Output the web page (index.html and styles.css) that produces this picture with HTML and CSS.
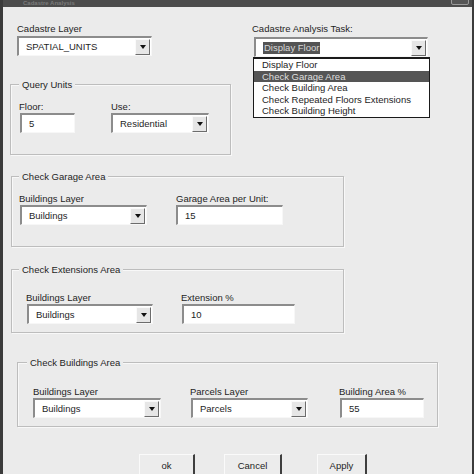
FILE: index.html
```html
<!DOCTYPE html>
<html>
<head>
<meta charset="utf-8">
<link rel="stylesheet" href="styles.css">
</head>
<body>
<div class="window">
  <div class="titlebar">
    <span class="title">Cadastre Analysis</span>
    <span class="close"></span>
  </div>
  <div class="content">
    <div class="top">
      <div class="left-col">
        <div class="lbl cad-lbl">Cadastre Layer</div>
        <div class="combo cad-combo"><span class="val">SPATIAL_UNITS</span><span class="btn"><i></i></span></div>
        <div class="group query">
          <span class="legend">Query Units</span>
          <div class="field f-floor">
            <div class="lbl">Floor:</div>
            <div class="input w-floor"><span class="val">5</span></div>
          </div>
          <div class="field f-use">
            <div class="lbl">Use:</div>
            <div class="combo w-use"><span class="val">Residential</span><span class="btn"><i></i></span></div>
          </div>
        </div>
      </div>
      <div class="right-col">
        <div class="lbl">Cadastre Analysis Task:</div>
        <div class="combo task-combo"><span class="val"><span class="sel">Display Floor</span></span><span class="btn"><i></i></span></div>
        <ul class="list">
          <li>Display Floor</li>
          <li class="hi">Check Garage Area</li>
          <li>Check Building Area</li>
          <li>Check Repeated Floors Extensions</li>
          <li>Check Building Height</li>
        </ul>
      </div>
    </div>

    <div class="group garage">
      <span class="legend">Check Garage Area</span>
      <div class="field">
        <div class="lbl">Buildings Layer</div>
        <div class="combo w-g1"><span class="val">Buildings</span><span class="btn"><i></i></span></div>
      </div>
      <div class="field">
        <div class="lbl lbl-left">Garage Area per Unit:</div>
        <div class="input w-g2"><span class="val">15</span></div>
      </div>
    </div>

    <div class="group ext">
      <span class="legend">Check Extensions Area</span>
      <div class="field">
        <div class="lbl">Buildings Layer</div>
        <div class="combo w-e1"><span class="val">Buildings</span><span class="btn"><i></i></span></div>
      </div>
      <div class="field">
        <div class="lbl">Extension %</div>
        <div class="input w-e2"><span class="val">10</span></div>
      </div>
    </div>

    <div class="group bld">
      <span class="legend">Check Buildings Area</span>
      <div class="field">
        <div class="lbl lbl-flush">Buildings Layer</div>
        <div class="combo w-b1 flush"><span class="val">Buildings</span><span class="btn"><i></i></span></div>
      </div>
      <div class="field f-parcels">
        <div class="lbl">Parcels Layer</div>
        <div class="combo w-b2"><span class="val">Parcels</span><span class="btn"><i></i></span></div>
      </div>
      <div class="field f-area">
        <div class="lbl">Building Area %</div>
        <div class="input w-b3"><span class="val">55</span></div>
      </div>
    </div>

    <div class="buttons">
      <div class="button b-ok">ok</div>
      <div class="button b-cancel">Cancel</div>
      <div class="button b-apply">Apply</div>
    </div>
  </div>
</div>
</body>
</html>
```

FILE: styles.css
```css
* { box-sizing: border-box; }
html, body { margin: 0; padding: 0; }
body {
  width: 474px;
  height: 474px;
  overflow: hidden;
  background: #ebebeb;
  font-family: "Liberation Sans", Arial, sans-serif;
  font-size: 9.5px;
  color: #1e1e1e;
}
.window {
  width: 474px;
  height: 474px;
  border-left: 3px solid #3b3b3b;
  border-right: 2px solid #3b3b3b;
  background: #ebebeb;
  overflow: hidden;
}
.titlebar {
  height: 7px;
  background: #4c4c4c;
  position: relative;
  overflow: hidden;
  display: flex;
  align-items: center;
}
.title {
  margin-left: 20px;
  font-size: 6px;
  line-height: 7px;
  color: #7a7a7a;
  font-weight: bold;
}
.close {
  position: absolute;
  right: 3px;
  top: -2px;
  width: 18px;
  height: 7px;
  border: 1px solid #9a9a9a;
  border-radius: 2px;
  background: #555;
}
.content {
  padding-top: 15px;
}
.lbl {
  height: 13px;
  line-height: 13px;
  white-space: nowrap;
}
.top {
  display: flex;
  gap: 21px;
  padding-left: 7px;
}
.left-col { width: 221px; }
.cad-lbl { margin-left: 7px; }
.cad-combo { margin-left: 7px; margin-top: 1px; width: 135px; }

/* controls */
.combo, .input {
  height: 20px;
  background: #fff;
  border-top: 2px solid #8c8c8c;
  border-left: 2px solid #8c8c8c;
  border-right: 1px solid #f7f7f7;
  border-bottom: 1px solid #f7f7f7;
  display: flex;
  align-items: center;
  position: relative;
}
.val {
  flex: 1;
  padding-left: 7px;
  white-space: nowrap;
  overflow: hidden;
}
.btn {
  width: 15px;
  height: 16px;
  margin-right: 1px;
  background: #e6e6e6;
  border-top: 1px solid #fafafa;
  border-left: 1px solid #fafafa;
  border-right: 1px solid #6c6c6c;
  border-bottom: 1px solid #6c6c6c;
  display: flex;
  align-items: center;
  justify-content: center;
}
.btn i {
  width: 0;
  height: 0;
  border-left: 3px solid transparent;
  border-right: 3px solid transparent;
  border-top: 4px solid #111;
}

/* groups */
.group {
  position: relative;
  border: 1px solid #bdbdbd;
  box-shadow: inset 1px 1px 0 #f8f8f8, 1px 1px 0 #f8f8f8;
  display: flex;
  align-items: flex-start;
}
.legend {
  position: absolute;
  top: -7px;
  height: 13px;
  line-height: 13px;
  padding: 0 3px;
  background: #ebebeb;
  white-space: nowrap;
}
.field .combo, .field .input { margin-left: 1px; }

.query {
  margin-top: 28px;
  width: 221px;
  height: 71px;
  padding: 15px 0 0 8px;
  gap: 36px;
}
.query .legend { left: 8px; }
.w-floor { width: 55px; }
.w-use { width: 98px; margin-left: 0 !important; }

.right-col { position: relative; width: 180px; }
.task-combo { margin-left: 2px; margin-top: 2px; width: 174px; }
.task-combo .val { padding-left: 7px; }
.sel {
  background: #545454;
  color: #d8d8d8;
  padding: 0 1px;
  line-height: 12px;
  display: inline-block;
}
.list {
  position: absolute;
  left: 1px;
  top: 35px;
  width: 177px;
  margin: 0;
  padding: 0;
  list-style: none;
  background: #fff;
  border: 1px solid #1a1a1a;
  border-top-width: 2px;
}
.list li {
  height: 11.6px;
  line-height: 11.6px;
  padding-left: 8px;
  white-space: nowrap;
}
.list li.hi {
  background: #555;
  color: #dedede;
}

.garage {
  margin-top: 21px;
  margin-left: 8px;
  width: 333px;
  height: 71px;
  padding: 15px 0 0 7px;
  gap: 29px;
}
.garage .legend { left: 7px; }
.w-g1 { width: 127px; }
.w-g2 { width: 107px; margin-left: 0 !important; }

.ext {
  margin-top: 22px;
  margin-left: 8px;
  width: 333px;
  height: 64px;
  padding: 21px 0 0 14px;
  gap: 28px;
}
.ext .legend { left: 7px; }
.w-e1 { width: 126px; }
.w-e2 { width: 113px; }

.bld {
  margin-top: 29px;
  margin-left: 14px;
  width: 421px;
  height: 65px;
  padding: 22px 0 0 15px;
  gap: 29px;
}
.bld .legend { left: 9px; }
.w-b1 { width: 128px; margin-left: 0 !important; }
.w-b2 { width: 117px; }
.f-area { margin-left: 2px; }
.w-b3 { width: 84px; }

/* buttons */
.buttons {
  display: flex;
  margin-top: 27px;
  padding-left: 136px;
}
.button {
  height: 24px;
  line-height: 22px;
  text-align: center;
  background: #ececec;
  border-top: 1px solid #fafafa;
  border-left: 1px solid #fafafa;
  border-right: 2px solid #3e3e3e;
  border-bottom: 2px solid #3e3e3e;
}
.b-ok { width: 56px; }
.b-cancel { width: 58px; margin-left: 29px; }
.b-apply { width: 50px; margin-left: 35px; }
```
